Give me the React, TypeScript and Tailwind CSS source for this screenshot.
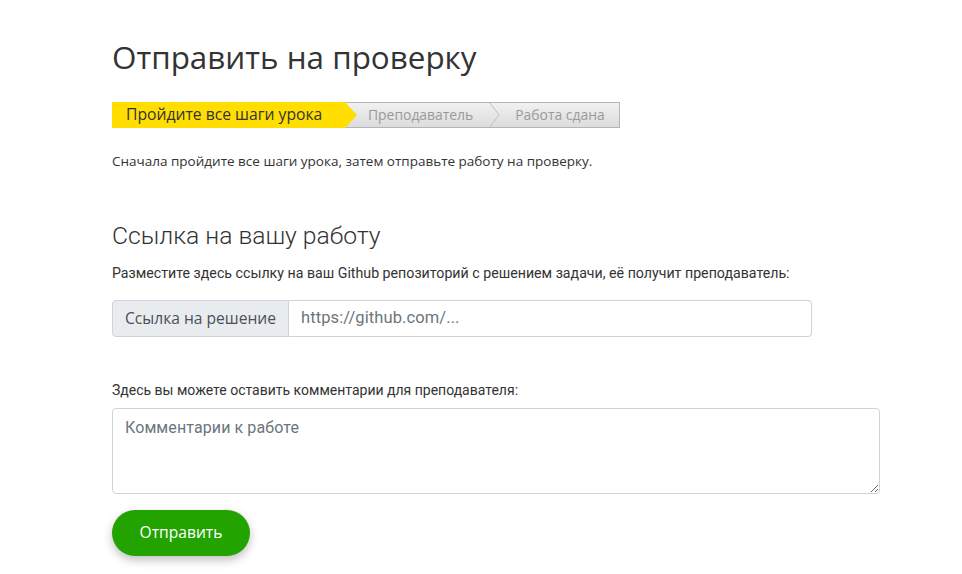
import { useState } from "react";

const sans = { fontFamily: "'Open Sans', Lato, sans-serif" };
const narrow = { fontFamily: "Roboto, 'Noto Sans', sans-serif" };

function Stepper() {
  return (
    <div className="flex h-[26px] w-[508px] items-stretch">
      <div
        className="relative z-10 -mr-3 flex w-[245px] items-center bg-[#ffde00] pl-[14px] text-[15.7px] text-[#333]"
        style={{ clipPath: "polygon(0 0, 233px 0, 100% 50%, 233px 100%, 0 100%)" }}
      >
        Пройдите все шаги урока
      </div>
      <div className="flex flex-1 items-stretch border border-[#b5b5b5] bg-gradient-to-b from-[#f1f1f1] to-[#dcdcdc] text-[13.9px] text-[#9a9a9a]">
        <div className="flex items-center pl-[22px] pr-[16px]">Преподаватель</div>
        <svg width="11" height="24" viewBox="0 0 11 24" className="shrink-0">
          <polyline points="1,0 10,12 1,24" fill="none" stroke="#bdbdbd" strokeWidth="1" />
        </svg>
        <div className="flex items-center pl-[15px]">Работа сдана</div>
      </div>
    </div>
  );
}

export default function App() {
  const [link, setLink] = useState("");
  const [comment, setComment] = useState("");

  return (
    <div className="min-h-screen bg-white text-[#333]" style={sans}>
      <div className="pl-[112px] pt-[36px]">
        <h1 className="text-[31.4px] leading-[42px] text-[#333]">Отправить на проверку</h1>

        <div className="mt-[24px]">
          <Stepper />
        </div>

        <p className="mt-[24px] text-[13.5px] leading-[18px] text-[#333]">
          Сначала пройдите все шаги урока, затем отправьте работу на проверку.
        </p>

        <h2 className="mt-[50px] text-[24.7px] leading-[32px] text-[#333]" style={{ ...narrow, fontWeight: 300 }}>
          Ссылка на вашу работу
        </h2>

        <p className="mt-[12px] text-[14.2px] leading-[18px] text-[#333]" style={narrow}>
          Разместите здесь ссылку на ваш Github репозиторий с решением задачи, её получит преподаватель:
        </p>

        <div className="mt-[18px] flex h-[37px] w-[700px]">
          <span className="flex items-center rounded-l-[4px] border border-[#ced4da] bg-[#e9ecef] px-[12px] text-[15.6px] text-[#495057]">
            Ссылка на решение
          </span>
          <input
            value={link}
            onChange={(e) => setLink(e.target.value)}
            placeholder="https://github.com/..."
            className="flex-1 rounded-r-[4px] border border-l-0 border-[#ced4da] px-[12px] text-[16.5px] tracking-[0.1px] text-[#495057] outline-none placeholder:text-[#6c757d]"
            style={narrow}
          />
        </div>

        <p className="mt-[44px] text-[14px] leading-[18px] text-[#333]" style={narrow}>
          Здесь вы можете оставить комментарии для преподавателя:
        </p>

        <textarea
          value={comment}
          onChange={(e) => setComment(e.target.value)}
          placeholder="Комментарии к работе"
          className="mt-[9px] block h-[86px] w-[768px] rounded-[4px] border border-[#ced4da] px-[12px] py-[7px] text-[16px] tracking-[0.1px] text-[#495057] outline-none placeholder:text-[#6c757d]"
          style={narrow}
        />

        <button className="mt-[16px] h-[46px] w-[138px] rounded-full bg-[#22a300] text-[15.6px] text-white shadow-[0_4px_10px_rgba(0,0,0,0.25)]">
          Отправить
        </button>
      </div>
    </div>
  );
}
